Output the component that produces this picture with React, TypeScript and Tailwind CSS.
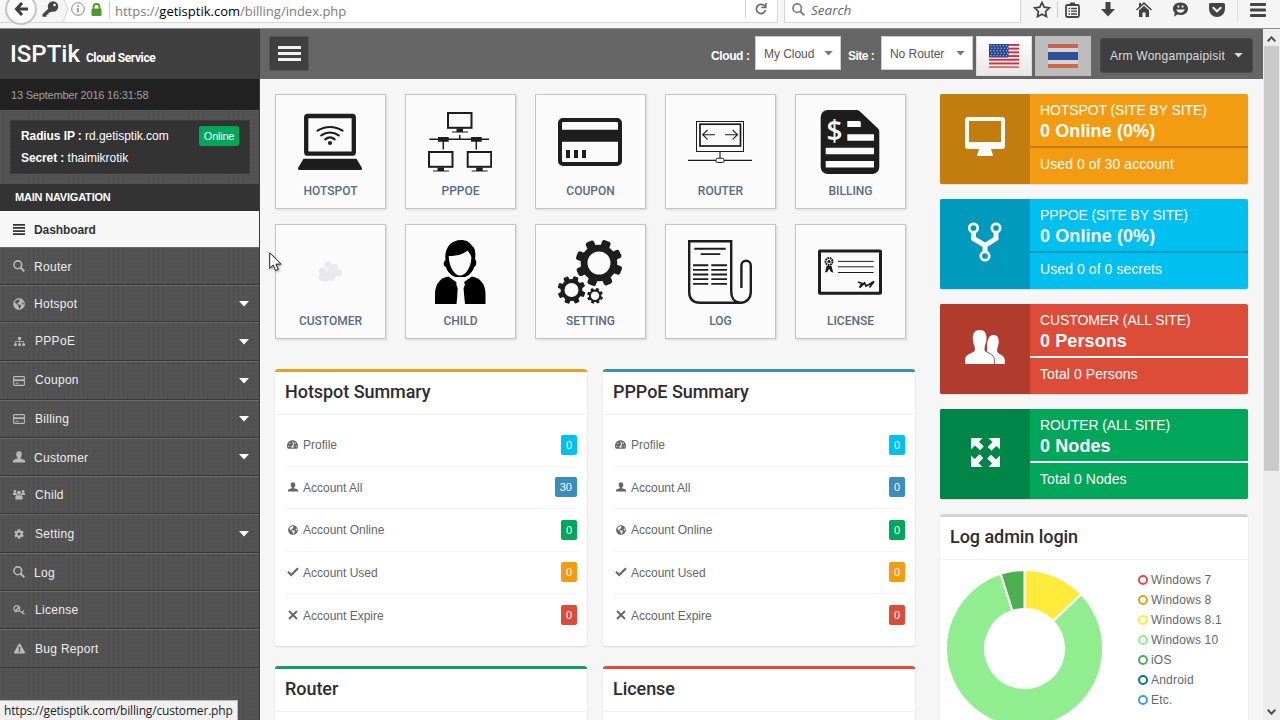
import React from 'react';
import { clsx } from 'clsx';
import {
  FaCog,
  FaExclamationTriangle,
  FaGlobeAmericas,
  FaSitemap,
  FaTachometerAlt,
} from 'react-icons/fa';

/* ---------- small icons ---------- */

function BarsIcon() {
  return (
    <svg width="12" height="11" viewBox="0 0 12 11" fill="currentColor">
      <path d="M0 0h12v1.700H0zM0 3.100h12v1.700H0zM0 6.200h12v1.700H0zM0 9.300h12V11H0z" />
    </svg>
  );
}

function SearchIcon({ className }: { className?: string }) {
  return (
    <svg width="12" height="12" viewBox="0 0 12 12" className={className} fill="none" stroke="currentColor">
      <circle cx="4.800" cy="4.800" r="3.900" strokeWidth="1.600" />
      <path d="M7.600 7.600l3.700 3.700" strokeWidth="2" />
    </svg>
  );
}

function CardIcon() {
  return (
    <svg width="12" height="10" viewBox="0 0 12 10" fill="none" stroke="currentColor">
      <rect x="0.600" y="0.600" width="10.800" height="8.800" rx="0.800" strokeWidth="1.100" />
      <path d="M1 4.200h10" strokeWidth="1.800" />
      <path d="M2.500 7.300h3" strokeWidth="0.900" />
    </svg>
  );
}

function UserIcon({ size = 13 }: { size?: number }) {
  return (
    <svg width={size} height={size} viewBox="0 0 13 13" fill="currentColor">
      <path d="M6.500 0.300c2 0 3 1.400 3 3.200 0 1.500-.6 2.900-1.500 3.700v.8l3.900 1.500c.8.300 1.100.9 1.100 1.700v1.300H0v-1.300c0-.8.300-1.400 1.100-1.700L5 8v-.8C4.100 6.400 3.500 5 3.500 3.500c0-1.800 1-3.200 3-3.200z" />
    </svg>
  );
}

function UsersIcon() {
  return (
    <svg width="12" height="10" viewBox="0 0 12 10" fill="currentColor">
      <circle cx="1.900" cy="1.500" r="1.400" />
      <circle cx="10.100" cy="1.500" r="1.400" />
      <circle cx="6" cy="2.700" r="2" />
      <path d="M0 3h3.300L4.300 5H0zM12 3H8.700L7.700 5H12zM2.400 9.500V6.800c0-.9.6-1.500 1.500-1.500h4.200c.9 0 1.500.6 1.500 1.500v2.700z" />
    </svg>
  );
}

function KeyIcon() {
  return (
    <svg width="12" height="10" viewBox="0 0 12 10" fill="none" stroke="currentColor" strokeWidth="1.300">
      <circle cx="3.800" cy="3.600" r="2.900" />
      <path d="M6 5.500l5.500 3.700M9.300 7.600l1.300-2M2 7l3.800-5" />
    </svg>
  );
}

function CheckIcon() {
  return (
    <svg width="12" height="10" viewBox="0 0 12 10" fill="none" stroke="currentColor" strokeWidth="2.200">
      <path d="M1 4.800l3.200 3.200L11 1.300" />
    </svg>
  );
}

function CrossIcon() {
  return (
    <svg width="10" height="10" viewBox="0 0 10 10" fill="none" stroke="currentColor" strokeWidth="1.900">
      <path d="M1 1l8 8M9 1L1 9" />
    </svg>
  );
}

function CaretDown({ className }: { className?: string }) {
  return (
    <svg width="10" height="6" viewBox="0 0 10 6" className={className} fill="currentColor">
      <path d="M0 0h10L5 5.500z" />
    </svg>
  );
}

/* ---------- tile icons, all on a 64px grid ---------- */

const INK = '#1d1d1d';

function Svg64({ children }: { children: React.ReactNode }) {
  return (
    <svg width="64" height="64" viewBox="0 0 64 64" fill="none" className="mr-px">
      {children}
    </svg>
  );
}

function HotspotIcon() {
  return (
    <Svg64>
      <rect x="8.200" y="6" width="47.600" height="37.700" rx="1.500" stroke={INK} strokeWidth="4.300" />
      <path d="M5.500 48.700h53L64 58c.3 1.300-.4 2-1.500 2h-61C.4 60-.3 59.300 0 58z" fill={INK} />
      <circle cx="32" cy="33" r="2.100" fill={INK} />
      <path
        d="M19.500 20.700c7.500-5 17.500-5 25 0M23.200 25.300c5.300-3.700 12.300-3.700 17.600 0M27.300 29.300c2.800-2.200 6.600-2.200 9.400 0"
        stroke={INK}
        strokeWidth="2.100"
        strokeLinecap="round"
      />
    </Svg64>
  );
}

function MiniMonitor({ x, y }: { x: number; y: number }) {
  return (
    <g transform={`translate(${x} ${y})`}>
      <rect x="1" y="1" width="23.500" height="14.800" stroke={INK} strokeWidth="2" />
      <path d="M9.500 16.500h6.500v3H9.500zM5 19.400h16v1H5z" fill={INK} />
    </g>
  );
}

function PppoeIcon() {
  return (
    <Svg64>
      <MiniMonitor x={19} y={2} />
      <MiniMonitor x={0} y={41} />
      <MiniMonitor x={38.700} y={41} />
      <path d="M1.300 29.200h59.700M31.700 25v4M15.300 31v8.500M48.300 31v8.500" stroke={INK} strokeWidth="1.500" />
      <path d="M10 27h10.700v4.700H10zM43 27h10.700v4.700H43z" fill={INK} />
    </Svg64>
  );
}

function CouponIcon() {
  return (
    <Svg64>
      <rect x="2" y="10" width="60" height="44" rx="3" stroke={INK} strokeWidth="4" />
      <path d="M2 19.700h60v12H2zM8 40h4v8H8zM16 40h4v8h-4zM24 40h4v8h-4z" fill={INK} />
    </Svg64>
  );
}

function RouterIcon() {
  return (
    <Svg64>
      <rect x="8.500" y="11.500" width="47" height="30" stroke={INK} />
      <rect x="12" y="14.200" width="40.500" height="21.800" stroke={INK} strokeWidth="1.700" />
      <path
        d="M27 24.700H14.700M19.500 20l-4.800 4.700 4.800 4.700M37 24.700h12.500M44.700 20l4.800 4.700-4.800 4.700M32 42v6M0 50.400h28M36 50.400h28"
        stroke={INK}
        strokeWidth="1.100"
      />
      <rect x="28" y="48.300" width="8" height="4.200" rx="1.500" stroke={INK} />
    </Svg64>
  );
}

function BillingIcon() {
  return (
    <Svg64>
      <path d="M9.700 0H38c2 0 3 .5 4.500 2L59 17.500c1.500 1.500 2.300 2.500 2.300 4.500v35a7 7 0 0 1-7 7H9.700a7 7 0 0 1-7-7V7a7 7 0 0 1 7-7z" fill={INK} />
      <path
        d="M29.300 11h12a1.500 1.500 0 0 1 1.500 1.500V17H29.300zM29.300 24.200H56v6.500H29.300zM7.700 37.800H56v6.500H7.700zM7.700 51H56v6.500H7.700z"
        fill="#fafafa"
      />
      <text x="16.500" y="30.500" textAnchor="middle" fill="#fafafa" fontFamily="Open Sans, sans-serif" fontWeight="600" fontSize="28">
        $
      </text>
    </Svg64>
  );
}

function CustomerIcon() {
  return (
    <Svg64>
      <g fill="#e8e9ea">
        <circle cx="30" cy="25" r="3.600" />
        <circle cx="36.500" cy="27" r="3.300" />
        <circle cx="24.500" cy="31" r="3.600" />
        <circle cx="40.500" cy="33" r="3.400" />
        <ellipse cx="27" cy="37" rx="6.300" ry="4.500" />
        <ellipse cx="33.500" cy="34" rx="5" ry="7" />
      </g>
    </Svg64>
  );
}

function ChildIcon() {
  return (
    <Svg64>
      <path
        d="M17.500 20C16 8 23 0 33 0c5 0 9 2 11 6 3 1 4 7 3 13 2 2 1.500 7-.8 8C44 34 38 38 32.300 38S20 34 17.800 27c-2.800-1-2.800-5-.3-7z"
        fill="#000"
      />
      <path d="M20.700 16c7 0 13.300-1 19-5.500 1.500 3 4 4.500 3.600 8C42.800 28 37.500 35.500 32 35.500S21.200 27.500 20.700 16z" fill="#fafafa" />
      <path d="M19 37h26l-13 9z" fill="#fafafa" />
      <path d="M20.500 36.500l9 6.500L30 64H7V54c0-10 5.500-16.500 13.500-17.500z" fill="#000" />
      <path d="M43.800 36.500l-9 6.500L36 64h21.500V54c0-10-5.700-16.500-13.700-17.500z" fill="#000" />
      <path d="M28.500 42h7.500l1 2.500-1.500 4L37 64h-8.500l1.500-15.500-1.700-4z" fill="#fafafa" />
    </Svg64>
  );
}

interface GearProps {
  cx: number;
  cy: number;
  r: number;
  hole: number;
}

function Gear({ cx, cy, r, hole }: GearProps) {
  const ring = (r * 0.78 + hole) / 2;
  return (
    <g transform={`translate(${cx} ${cy})`}>
      <circle r={ring} stroke={INK} strokeWidth={r * 0.78 - hole} />
      {[0, 1, 2, 3, 4, 5, 6, 7].map((i) => (
        <rect
          key={i}
          x={-r * 0.19}
          y={-r}
          width={r * 0.38}
          height={r * 0.42}
          rx={r * 0.1}
          fill={INK}
          transform={`rotate(${i * 45 + 20})`}
        />
      ))}
    </g>
  );
}

function SettingIcon() {
  return (
    <Svg64>
      <Gear cx={41} cy={23} r={23.500} hole={11.500} />
      <Gear cx={13.500} cy={50} r={14} hole={7} />
      <Gear cx={37} cy={55.800} r={8} hole={4.200} />
    </Svg64>
  );
}

function LogIcon() {
  return (
    <Svg64>
      <path
        d="M1.200 52V1.200h42V51c0 7 3.500 11.700 9.500 11.700S62.800 58 62.800 52V25.500a4.700 4.700 0 0 0-9.400 0V48M1.200 52c0 7 4 10.700 11 10.700h41"
        stroke={INK}
        strokeWidth="2.400"
      />
      <path
        d="M6.300 8.700h31.400M12.700 14.100h19.600M5 25.300h15.300M5 29.900h15.300M5 34.500h15.300M5 39.100h15.300M5 43.900h15.300M23.300 25.300H39M23.300 29.900H39M23.300 34.500H39M23.300 39.100H39M23.300 43.900H39"
        stroke={INK}
        strokeWidth="1.900"
      />
    </Svg64>
  );
}

function LicenseIcon() {
  return (
    <Svg64>
      <rect x="1.500" y="11" width="61" height="42.200" rx="0.500" stroke={INK} strokeWidth="3" />
      <circle cx="11" cy="21.500" r="3.500" stroke={INK} strokeWidth="2" strokeDasharray="1.800 0.600" />
      <circle cx="11" cy="21.500" r="1.600" fill={INK} />
      <path d="M8.500 26L7 32.500l2.500-.8 1.500-3 1.800 3 2.500 1L13.500 26z" fill={INK} />
      <path d="M20 21.400h35.700M20 26.800h35.700M20 32.500h35.700" stroke={INK} strokeWidth="1" />
      <path d="M40 42l4 1.500-2.500 4 5-4.500 1.500 3 3-1.500 5-3-4.500 6" stroke={INK} strokeWidth="1.700" />
    </Svg64>
  );
}

/* ---------- info box icons ---------- */

function MonitorGlyph() {
  return (
    <svg width="40" height="40" viewBox="0 0 40 40" fill="#fff">
      <path
        fillRule="evenodd"
        d="M3 0h34a3 3 0 0 1 3 3v26a3 3 0 0 1-3 3H26c.3 2 1.500 3.500 2 7H12c.5-3.500 1.700-5 2-7H3a3 3 0 0 1-3-3V3a3 3 0 0 1 3-3zm1 4v21h32V4z"
      />
    </svg>
  );
}

function ForkGlyph() {
  return (
    <svg width="40" height="40" viewBox="0 0 40 40" fill="none" stroke="#fff">
      <circle cx="8.500" cy="6" r="4.200" strokeWidth="2.700" />
      <circle cx="31" cy="6" r="4.200" strokeWidth="2.700" />
      <circle cx="20" cy="34" r="4.200" strokeWidth="2.700" />
      <path d="M8.500 10.500v6L20 23.500l11-7v-6M20 23v7" strokeWidth="5" />
    </svg>
  );
}

function PeopleGlyph() {
  return (
    <svg width="40" height="35" viewBox="0 0 40 35">
      <path
        d="M28.500 5c3.800 0 5.200 2.700 5.200 6.300 0 2.500-.4 4-1.100 6-.4 1.200-.5 2.500-.5 4 0 3 7.700 3.200 7.700 9V34H22V14c1-3 1-9 6.500-9z"
        fill="#fff"
      />
      <path
        d="M14.800 0c4.700 0 6.700 3.500 6.700 7.500 0 3-.5 5-1.300 7.500-.5 1.500-.7 3-.7 5 0 3 9.700 3.500 9.700 10v4H0v-4c0-6.500 9.900-7 9.900-10 0-2-.3-3.500-.8-5C8.300 12.500 7.800 10.500 7.800 7.500 7.800 3.500 10 0 14.800 0z"
        fill="#fff"
        stroke="#b13c2e"
        strokeWidth="1.500"
        paintOrder="stroke"
      />
    </svg>
  );
}

function ExpandGlyph() {
  return (
    <svg width="29" height="29" viewBox="0 0 29 29" fill="#fff">
      {['rotate(0)', 'rotate(90 14.500 14.500)', 'rotate(180 14.500 14.500)', 'rotate(270 14.500 14.500)'].map((t) => (
        <path key={t} transform={t} d="M0 0h11.500L8 3.700l4.800 4.800-3.800 3.800-5-4.800L0 11.500z" />
      ))}
    </svg>
  );
}

/* ---------- browser chrome ---------- */

function BrowserBar() {
  return (
    <div className="flex h-[29px] shrink-0 items-start overflow-hidden border-b border-[#8a8a8a] bg-[#f5f5f5] text-[#4a4a4a]">
      <div className="relative flex h-[23px] w-[778px] items-center border-r border-b border-[#d5d5d5] bg-white">
        <div className="absolute -top-[7px] left-[5px] flex size-[32px] items-center justify-center rounded-full border-2 border-[#c3c3c3] bg-[#fafafa]">
          <svg width="15" height="14" viewBox="0 0 15 14" fill="none" stroke="#3e3e3e" strokeWidth="3">
            <path d="M8 1L2.500 7 8 13M2.500 7H14" />
          </svg>
        </div>
        <div className="flex h-full w-[63px] shrink-0 items-center justify-end bg-[#f5f5f5]">
          <svg width="18" height="18" viewBox="0 0 18 18" className="mr-[4px] mb-[3px]">
            <circle cx="12" cy="5.500" r="5.200" fill="#444" />
            <circle cx="13.500" cy="4" r="1.300" fill="#f5f5f5" />
            <path d="M8.500 6.500l3 3-2 2H7.500v2H5.500v2.200H1.500v-2.500z" fill="#444" />
          </svg>
        </div>
        <svg width="6" height="22" viewBox="0 0 6 22" className="shrink-0">
          <path d="M0 0h1l4 9-5 13z" fill="#f5f5f5" />
          <path d="M1 0l4 9-5 13" fill="none" stroke="#cfcfcf" />
        </svg>
        <svg width="14" height="14" viewBox="0 0 14 14" className="mb-[4px] ml-[2px] shrink-0" fill="none" stroke="#888">
          <circle cx="7" cy="7" r="6.300" />
          <path d="M7 6v4.500M7 3.300V5" strokeWidth="1.500" />
        </svg>
        <svg width="11" height="13" viewBox="0 0 11 13" className="mb-[4px] ml-[6px] shrink-0" fill="none">
          <path d="M2.500 7V4a3 3 0 0 1 6 0v3" stroke="#4c9a2a" strokeWidth="1.800" />
          <rect x="0.500" y="5.500" width="10" height="7.500" rx="1" fill="#4c9a2a" />
        </svg>
        <div className="mb-[3px] ml-[7px] h-[18px] border-l border-[#d0d0d0]" />
        <span className="mb-px ml-[5px] font-['Open_Sans',sans-serif] text-[13px] leading-[20px] whitespace-nowrap text-[#7c7c7c]">
          https://<span className="text-black">getisptik.com</span>/billing/index.php
        </span>
        <div className="ml-auto flex h-full w-[34px] items-center justify-center pb-[4px]">
          <div className="mr-[9px] h-[18px] border-l border-[#d0d0d0]" />
          <svg width="12" height="12" viewBox="0 0 12 12" className="mr-[8px]" fill="none" stroke="#6c6c6c" strokeWidth="1.700">
            <path d="M9.800 3.300A4.600 4.600 0 1 0 10.500 7M10.800 0v4.500H6.300" />
          </svg>
        </div>
      </div>
      <div className="ml-[6px] flex h-[23px] w-[237px] items-center border border-t-0 border-[#d5d5d5] bg-white pl-[7px]">
        <SearchIcon className="mb-[4px] size-[13px] text-[#808080]" />
        <span className="mb-[2px] ml-[6px] font-['Open_Sans',sans-serif] text-[13.500px] leading-[20px] text-[#666] italic">Search</span>
      </div>
      <div className="flex h-[19px] flex-1 items-center pl-[12px]">
        <svg width="18" height="17" viewBox="0 0 18 17" fill="none" stroke="#444" strokeWidth="1.700">
          <path d="M9 1.500l2.200 4.700 5.100.7-3.700 3.600.9 5.100L9 13.200l-4.500 2.400.9-5.100L1.700 6.900l5.100-.7z" />
        </svg>
        <div className="ml-[6px] h-[16px] border-l border-[#ccc]" />
        <svg width="15" height="16" viewBox="0 0 15 16" fill="none" stroke="#444" className="ml-[7px]">
          <rect x="1" y="3" width="13" height="12" rx="1.500" strokeWidth="1.800" />
          <path d="M5 2h5" strokeWidth="3" />
          <path d="M3.500 6.500h1.500M6 6.500h6M3.500 9.200h1.500M6 9.200h6M3.500 12h1.500M6 12h6" strokeWidth="1.300" />
        </svg>
        <svg width="14" height="15" viewBox="0 0 14 15" fill="#444" className="ml-[21px]">
          <path d="M4.500 0h5v7H14l-7 7.500L0 7h4.500z" />
        </svg>
        <svg width="16" height="15" viewBox="0 0 16 15" fill="#444" className="ml-[21px]">
          <path d="M8 0l8 7.500-1 1L8 2.200 1 8.500l-1-1L3 4.700V1h2v1.800zM8 3.700l5 4.500V15H9.500v-4.500h-3V15H3V8.200z" />
        </svg>
        <svg width="15" height="15" viewBox="0 0 15 15" className="ml-[21px]">
          <path d="M7.500 0.500C12 .5 15 3.300 15 6.700S12 13 7.500 13c-1 0-2-.1-2.800-.4L1 14.500l.8-3.700C.6 9.700 0 8.300 0 6.700 0 3.300 3 .5 7.500.5z" fill="#444" />
          <path d="M3.300 7.500h8.400c-.5 2-2 3.200-4.200 3.200S3.800 9.500 3.300 7.500zM4.500 3.500h1.800v2H4.500zM8.700 3.500h1.800v2H8.700z" fill="#f5f5f5" />
        </svg>
        <svg width="16" height="14" viewBox="0 0 16 14" className="ml-[21px]">
          <path d="M1.500 0h13A1.500 1.500 0 0 1 16 1.500V6a8 8 0 0 1-16 0V1.500A1.500 1.500 0 0 1 1.500 0z" fill="#444" />
          <path d="M4.300 4.800L8 8.300l3.700-3.500" stroke="#f5f5f5" strokeWidth="2" fill="none" strokeLinecap="round" />
        </svg>
        <div className="ml-[12px] h-[22px] border-l border-[#ddd]" />
        <svg width="16" height="14" viewBox="0 0 16 14" fill="#444" className="ml-[12px]">
          <rect width="16" height="3" rx="1" />
          <rect y="5.500" width="16" height="3" rx="1" />
          <rect y="11" width="16" height="3" rx="1" />
        </svg>
      </div>
    </div>
  );
}

/* ---------- sidebar ---------- */

interface NavItem {
  label: string;
  icon: React.ReactNode;
  height: string;
  text?: string;
  caret?: boolean;
}

const navItems: NavItem[] = [
  { label: 'Router', icon: <SearchIcon />, height: 'h-[38px]' },
  { label: 'Hotspot', icon: <FaGlobeAmericas className="size-[12px]" />, height: 'h-[37px]', caret: true },
  { label: 'PPPoE', icon: <FaSitemap className="size-[11px]" />, height: 'h-[39px]', text: 'ml-[10px] pb-px', caret: true },
  { label: 'Coupon', icon: <CardIcon />, height: 'h-[39px]', text: 'ml-[10px] pb-px', caret: true },
  { label: 'Billing', icon: <CardIcon />, height: 'h-[38px]', text: 'ml-[10px] pb-px', caret: true },
  { label: 'Customer', icon: <UserIcon size={12} />, height: 'h-[38px]', caret: true },
  { label: 'Child', icon: <UsersIcon />, height: 'h-[38px]', text: 'ml-[10px] pb-px' },
  { label: 'Setting', icon: <FaCog className="size-[10px]" />, height: 'h-[39px]', text: 'ml-[10px] pt-px', caret: true },
  { label: 'Log', icon: <SearchIcon />, height: 'h-[38px]' },
  { label: 'License', icon: <KeyIcon />, height: 'h-[38px]', text: 'ml-[10px] pb-px' },
  { label: 'Bug Report', icon: <FaExclamationTriangle className="size-[11px]" />, height: 'h-[39px]', text: 'ml-[10px] pt-px' },
];

function Sidebar() {
  return (
    <aside className="flex w-[260px] shrink-0 flex-col border-r border-[#3c3c3c] bg-[#525252] bg-[repeating-linear-gradient(90deg,rgba(255,255,255,0.02)_0_2px,transparent_2px_5px),repeating-linear-gradient(0deg,rgba(0,0,0,0.04)_0_1px,transparent_1px_4px)]">
      <div className="flex h-[50px] items-baseline bg-[#404040] pt-[9px] pl-[10px] font-['Roboto',sans-serif] text-white">
        <span className="text-[24px] leading-[32px] font-medium">ISPTik</span>
        <span className="ml-[6px] text-[12px] font-bold tracking-[-0.4px]">Cloud Service</span>
      </div>
      <div className="h-[31px] bg-[#222] pl-[11px] text-[11px] leading-[33px] tracking-[-0.2px] text-[#a0a0a0]">13 September 2016 16:31:58</div>
      <div className="h-[74px] border-t border-[#5b5b5b] pt-[9px] pr-[9px] pl-[10px]">
        <div className="flex h-[54px] justify-between border border-[#3c3c3c] bg-[#333] pt-[5px] pr-[10px] pl-[10px] text-[12px] leading-[21px] text-white">
          <div>
            <p className="tracking-[-0.02px]">
              <b className="tracking-[-0.1px]">Radius IP :</b> rd.getisptik.com
            </p>
            <p className="mt-px">
              <b className="tracking-[-0.1px]">Secret :</b> thaimikrotik
            </p>
          </div>
          <span className="h-[20px] w-[40px] rounded-[2px] bg-[#00a65a] text-center text-[11px] leading-[20px] tracking-[-0.25px]">Online</span>
        </div>
      </div>
      <div className="h-[27px] bg-[#333] pl-[15px] text-[11px] leading-[27px] font-bold tracking-[-0.2px] text-white">MAIN NAVIGATION</div>
      <div className="flex h-[36px] items-center bg-[#f7f7f7] pl-[13px] text-[12px] font-bold text-[#333]">
        <BarsIcon />
        <span className="ml-[9px] pt-px tracking-[-0.1px]">Dashboard</span>
      </div>
      {navItems.map(({ label, icon, height, text, caret }) => (
        <div
          key={label}
          className={clsx('flex shrink-0 items-center border-t border-b border-t-[#6b6b6b] border-b-[#383838] pl-[13px] text-[12px] text-[#eee]', height)}
        >
          <span className="flex w-[12px] justify-center text-[#b9b9b9]">{icon}</span>
          <span className={clsx('tracking-[0.3px]', text ?? 'ml-[9px] pt-px')}>{label}</span>
          {caret && <CaretDown className="mr-[10px] ml-auto text-white" />}
        </div>
      ))}
    </aside>
  );
}

/* ---------- top header ---------- */

function Select({ value, width }: { value: string; width: string }) {
  return (
    <div className={clsx('mt-[7px] flex h-[34px] items-center justify-between border border-[#ccc] bg-white pr-[7px] pl-[8px] text-[12px] text-[#555]', width)}>
      <span className="pt-px tracking-[-0.05px]">{value}</span>
      <CaretDown className="h-[5px] w-[9px] text-[#777]" />
    </div>
  );
}

function UsFlag() {
  return (
    <svg width="30" height="24" viewBox="0 0 30 24">
      <rect width="30" height="24" fill="#f6eeee" />
      {[0, 1, 2, 3, 4, 5, 6].map((i) => (
        <rect key={i} y={i * 3.700} width="30" height="1.900" fill={i > 5 ? '#e07050' : '#cc3344'} />
      ))}
      <rect width="19.500" height="13.500" fill="#27458c" />
      {[0, 1, 2, 3, 4].map((r) =>
        [0, 1, 2, 3, 4, 5].map((c) => <circle key={`${r}${c}`} cx={1.900 + c * 3.100 + (r % 2)} cy={1.700 + r * 2.500} r="0.600" fill="#cfd8ee" />)
      )}
    </svg>
  );
}

function ThaiFlag() {
  return (
    <svg width="30" height="24" viewBox="0 0 30 24">
      <rect width="30" height="24" fill="#d3d3d3" />
      <rect width="30" height="4" fill="#c8614f" />
      <rect y="8" width="30" height="8" fill="#2f4f96" />
      <rect y="20" width="30" height="4" fill="#cf6a45" />
    </svg>
  );
}

function Header() {
  return (
    <header className="flex h-[50px] shrink-0 items-start bg-[#666] pr-[10px] pl-[9px]">
      <button className="mt-[7px] flex h-[35px] w-[40px] flex-col items-center justify-center gap-[3px] border border-[#555] bg-[#404040]">
        <span className="h-[3px] w-[23px] bg-[#f2f2f2]" />
        <span className="h-[3px] w-[23px] bg-[#f2f2f2]" />
        <span className="h-[3px] w-[23px] bg-[#f2f2f2]" />
      </button>
      <span className="mt-[18px] ml-auto w-[44px] text-[12px] leading-[18px] font-bold tracking-[-0.4px] text-white">Cloud :</span>
      <Select value="My Cloud" width="w-[86px]" />
      <span className="mt-[18px] ml-[7px] w-[33px] text-[12px] leading-[18px] font-bold tracking-[-0.5px] text-white">Site :</span>
      <Select value="No Router" width="w-[92px]" />
      <div className="mt-[7px] ml-[3px] flex h-[40px] w-[56px] items-center justify-center border border-[#ddd] bg-gradient-to-b from-white to-[#e8e8e8]">
        <UsFlag />
      </div>
      <div className="mt-[7px] ml-[3px] flex h-[40px] w-[56px] items-center justify-center bg-[#bdbdbd]">
        <ThaiFlag />
      </div>
      <div className="mt-[9px] ml-[9px] flex h-[35px] w-[153px] items-center justify-between rounded-[3px] border border-[#4a4a4a] bg-[#3f3f3f] pr-[9px] pl-[9px] text-[12px] text-[#ddd]">
        <span className="tracking-[0.25px]">Arm Wongampaipisit</span>
        <CaretDown className="h-[5px] w-[9px]" />
      </div>
    </header>
  );
}

/* ---------- main content ---------- */

const tiles = [
  { label: 'HOTSPOT', icon: <HotspotIcon /> },
  { label: 'PPPOE', icon: <PppoeIcon /> },
  { label: 'COUPON', icon: <CouponIcon /> },
  { label: 'ROUTER', icon: <RouterIcon /> },
  { label: 'BILLING', icon: <BillingIcon /> },
  { label: 'CUSTOMER', icon: <CustomerIcon /> },
  { label: 'CHILD', icon: <ChildIcon /> },
  { label: 'SETTING', icon: <SettingIcon /> },
  { label: 'LOG', icon: <LogIcon /> },
  { label: 'LICENSE', icon: <LicenseIcon /> },
];

function Tile({ label, icon }: { label: string; icon: React.ReactNode }) {
  return (
    <div className="flex h-[115px] flex-col items-center border border-[#c4c4c4] bg-[#fbfbfb] pt-[15px] shadow-[1px_1px_2px_rgba(0,0,0,0.12)]">
      {icon}
      <span className="mt-[8px] font-['Roboto',sans-serif] text-[12px] leading-[18px] font-medium text-[#566b85]">{label}</span>
    </div>
  );
}

const summaryRows = [
  { label: 'Profile', icon: <FaTachometerAlt className="size-[11px]" />, color: 'bg-[#00c0ef]' },
  { label: 'Account All', icon: <UserIcon size={10} />, color: 'bg-[#3c8dbc]' },
  { label: 'Account Online', icon: <FaGlobeAmericas className="size-[10px]" />, color: 'bg-[#00a65a]' },
  { label: 'Account Used', icon: <CheckIcon />, color: 'bg-[#f39c12]' },
  { label: 'Account Expire', icon: <CrossIcon />, color: 'bg-[#dd4b39]' },
];

interface PanelProps {
  title: string;
  border: string;
  className?: string;
  children?: React.ReactNode;
}

function Panel({ title, border, className, children }: PanelProps) {
  return (
    <section className={clsx('rounded-[3px] border-t-[3px] bg-white shadow-[0_1px_2px_rgba(0,0,0,0.12)]', border, className)}>
      <h3 className="h-[43px] border-b border-[#f0f0f0] pl-[10px] font-['Roboto',sans-serif] text-[18px] leading-[40px] font-medium tracking-[-0.05px] text-[#2d2d2d]">
        {title}
      </h3>
      {children}
    </section>
  );
}

function SummaryPanel({ title, border, values }: { title: string; border: string; values: number[] }) {
  return (
    <Panel title={title} border={border} className="h-[277px]">
      <ul className="px-[10px] pt-[9px]">
        {summaryRows.map((row, i) => (
          <li key={row.label} className="flex h-[42.500px] items-center border-b border-[#f4f4f4] text-[12px] text-[#666] last:border-0">
            <span className="ml-px flex w-[13px] justify-center">{row.icon}</span>
            <span className="ml-[4px] pt-px">{row.label}</span>
            <span className={clsx('ml-auto h-[20px] rounded-[2px] px-[5px] text-[11px] leading-[20px] text-white', row.color)}>{values[i]}</span>
          </li>
        ))}
      </ul>
    </Panel>
  );
}

interface InfoBoxProps {
  title: string;
  value: string;
  note: string;
  icon: React.ReactNode;
  color: string;
  dark: string;
  line: string;
}

const infoBoxes: InfoBoxProps[] = [
  { title: 'HOTSPOT (SITE BY SITE)', value: '0 Online (0%)', note: 'Used 0 of 30 account', icon: <MonitorGlyph />, color: 'bg-[#f39c12]', dark: 'bg-[#c27d0e]', line: 'bg-[#c27d0e]' },
  { title: 'PPPOE (SITE BY SITE)', value: '0 Online (0%)', note: 'Used 0 of 0 secrets', icon: <ForkGlyph />, color: 'bg-[#00c0ef]', dark: 'bg-[#009abf]', line: 'bg-[#009abf]' },
  { title: 'CUSTOMER (ALL SITE)', value: '0 Persons', note: 'Total 0 Persons', icon: <PeopleGlyph />, color: 'bg-[#dd4b39]', dark: 'bg-[#b13c2e]', line: 'bg-white' },
  { title: 'ROUTER (ALL SITE)', value: '0 Nodes', note: 'Total 0 Nodes', icon: <ExpandGlyph />, color: 'bg-[#00a65a]', dark: 'bg-[#008548]', line: 'bg-white' },
];

function InfoBox({ title, value, note, icon, color, dark, line }: InfoBoxProps) {
  return (
    <div className={clsx('flex h-[90px] shrink-0 overflow-hidden rounded-[2px] text-white shadow-[0_1px_1px_rgba(0,0,0,0.1)]', color)}>
      <div className={clsx('flex w-[90px] items-center justify-center pb-[4px]', dark)}>{icon}</div>
      <div className="flex-1 pt-[6px]">
        <p className="pl-[10px] text-[14px] leading-[20px] tracking-[-0.1px]">{title}</p>
        <p className="pl-[10px] text-[18px] leading-[22px] font-bold tracking-[0.1px]">{value}</p>
        <div className={clsx('mt-[4px] h-[2px]', line)} />
        <p className="mt-[6px] pl-[10px] text-[14px] leading-[20px] tracking-[0.08px]">{note}</p>
      </div>
    </div>
  );
}

const slices = [
  { from: 0, to: 46.400, color: '#ffeb3b' },
  { from: 46.400, to: 342.300, color: '#90ee90' },
  { from: 342.300, to: 360, color: '#4caf50' },
];

function point(r: number, deg: number) {
  const a = (deg * Math.PI) / 180;
  return `${(78.500 + r * Math.sin(a)).toFixed(2)} ${(78.500 - r * Math.cos(a)).toFixed(2)}`;
}

function Donut() {
  return (
    <svg width="157" height="157" viewBox="0 0 157 157">
      {slices.map(({ from, to, color }) => {
        const large = to - from > 180 ? 1 : 0;
        return (
          <path
            key={color}
            d={`M${point(78.500, from)}A78.500 78.500 0 ${large} 1 ${point(78.500, to)}L${point(39.500, to)}A39.500 39.500 0 ${large} 0 ${point(39.500, from)}Z`}
            fill={color}
            stroke="#fff"
            strokeWidth="2"
          />
        );
      })}
    </svg>
  );
}

const legend = [
  { label: 'Windows 7', color: 'border-[#dd4b5b]' },
  { label: 'Windows 8', color: 'border-[#d9a520]' },
  { label: 'Windows 8.1', color: 'border-[#ffeb3b]' },
  { label: 'Windows 10', color: 'border-[#90ee90]' },
  { label: 'iOS', color: 'border-[#4caf50]' },
  { label: 'Android', color: 'border-[#0d7a78]' },
  { label: 'Etc.', color: 'border-[#3d9be8]' },
];

function LoginPanel() {
  return (
    <Panel title="Log admin login" border="border-[#d2d6d6]" className="h-[230px] shrink-0">
      <div className="flex justify-between pt-[10px] pr-[26px] pl-[6px]">
        <Donut />
        <ul className="w-[84px]">
          {legend.map(({ label, color }) => (
            <li key={label} className="flex h-[20px] items-center text-[12px] whitespace-nowrap text-[#666]">
              <span className={clsx('size-[10px] shrink-0 rounded-full border-2', color)} />
              <span className="ml-[3px] tracking-[0.2px]">{label}</span>
            </li>
          ))}
        </ul>
      </div>
    </Panel>
  );
}

function Scrollbar() {
  return (
    <div className="flex w-[17px] shrink-0 flex-col items-center bg-[#ededed]">
      <svg width="9" height="6" viewBox="0 0 9 6" className="mt-[7px] mb-[4px] shrink-0" fill="none" stroke="#505050" strokeWidth="2">
        <path d="M0.700 5.300l3.800-4 3.800 4" />
      </svg>
      <div className="h-[425px] w-[15px] bg-[#c9c9c9]" />
      <svg width="9" height="6" viewBox="0 0 9 6" className="mt-auto mb-[5px]" fill="none" stroke="#505050" strokeWidth="2">
        <path d="M0.700 0.700l3.800 4 3.800-4" />
      </svg>
    </div>
  );
}

export default function App() {
  return (
    <div className="relative flex h-[720px] w-[1280px] flex-col overflow-hidden bg-[#f6f6f6] font-['Liberation_Sans',Arial,sans-serif]">
      <BrowserBar />
      <div className="flex min-h-0 flex-1">
        <Sidebar />
        <div className="flex min-w-0 flex-1 flex-col">
          <Header />
          <main className="flex min-h-0 flex-1 gap-[25px] overflow-hidden px-[15px] pt-[15px]">
            <div className="w-[640px] shrink-0">
              <div className="grid w-[631px] grid-cols-5 gap-x-[19px] gap-y-[15px]">
                {tiles.map((tile) => (
                  <Tile key={tile.label} {...tile} />
                ))}
              </div>
              <div className="mt-[30px] grid grid-cols-2 gap-x-[16px] gap-y-[20px]">
                <SummaryPanel title="Hotspot Summary" border="border-[#e8a020]" values={[0, 30, 0, 0, 0]} />
                <SummaryPanel title="PPPoE Summary" border="border-[#3c8dbc]" values={[0, 0, 0, 0, 0]} />
                <Panel title="Router" border="border-[#0f9d63]" className="h-[80px]" />
                <Panel title="License" border="border-[#dd4b39]" className="h-[80px]" />
              </div>
            </div>
            <div className="flex w-[308px] shrink-0 flex-col gap-[15px]">
              {infoBoxes.map((box) => (
                <InfoBox key={box.title} {...box} />
              ))}
              <LoginPanel />
            </div>
          </main>
        </div>
        <Scrollbar />
      </div>

      <div className="absolute bottom-0 left-0 h-[20px] w-[238px] border-t border-r border-[#bbb] bg-[#f0f0f0] pl-[4px] font-['Open_Sans',sans-serif] text-[12px] leading-[20px] tracking-[-0.17px] whitespace-nowrap text-[#222]">
        https://getisptik.com/billing/customer.php
      </div>
      <svg width="13" height="20" viewBox="0 0 13 20" className="absolute top-[252px] left-[269px] drop-shadow-[1px_1px_1px_rgba(0,0,0,0.4)]">
        <path d="M0.700 0.800v15.500l3.500-3.300 2.300 5.500 2.700-1.200-2.300-5.200h5z" fill="#fff" stroke="#222" />
      </svg>
    </div>
  );
}
